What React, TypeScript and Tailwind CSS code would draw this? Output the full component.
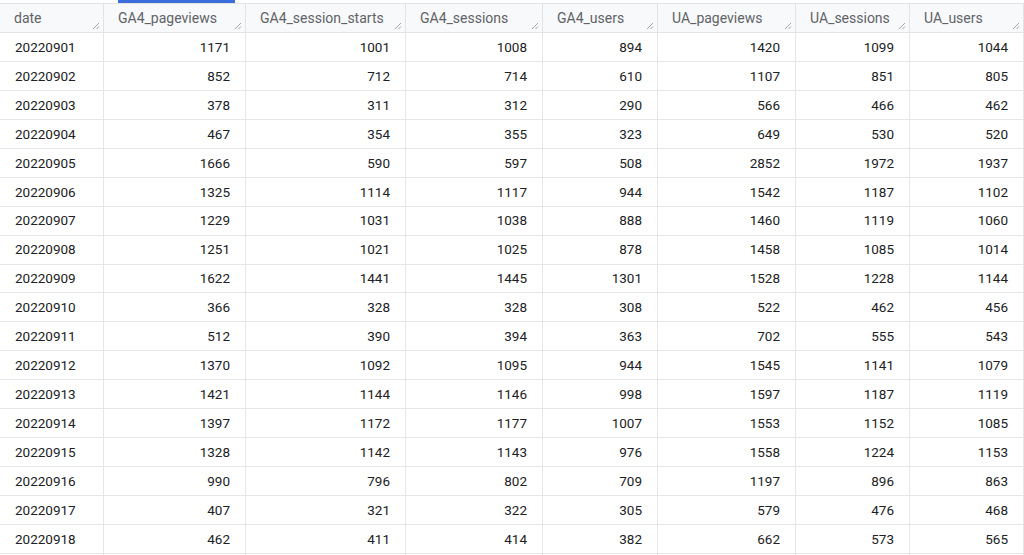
const columns = [
  { key: 'date', label: 'date', width: 'w-[104px]' },
  { key: 'ga4pv', label: 'GA4_pageviews', width: 'w-[142px]' },
  { key: 'ga4ss', label: 'GA4_session_starts', width: 'w-[160px]' },
  { key: 'ga4s', label: 'GA4_sessions', width: 'w-[137px]' },
  { key: 'ga4u', label: 'GA4_users', width: 'w-[115px]' },
  { key: 'uapv', label: 'UA_pageviews', width: 'w-[138px]' },
  { key: 'uas', label: 'UA_sessions', width: 'w-[114px]' },
  { key: 'uau', label: 'UA_users', width: 'w-[114px]' },
];

const rows: string[][] = [
  ['20220901', '1171', '1001', '1008', '894', '1420', '1099', '1044'],
  ['20220902', '852', '712', '714', '610', '1107', '851', '805'],
  ['20220903', '378', '311', '312', '290', '566', '466', '462'],
  ['20220904', '467', '354', '355', '323', '649', '530', '520'],
  ['20220905', '1666', '590', '597', '508', '2852', '1972', '1937'],
  ['20220906', '1325', '1114', '1117', '944', '1542', '1187', '1102'],
  ['20220907', '1229', '1031', '1038', '888', '1460', '1119', '1060'],
  ['20220908', '1251', '1021', '1025', '878', '1458', '1085', '1014'],
  ['20220909', '1622', '1441', '1445', '1301', '1528', '1228', '1144'],
  ['20220910', '366', '328', '328', '308', '522', '462', '456'],
  ['20220911', '512', '390', '394', '363', '702', '555', '543'],
  ['20220912', '1370', '1092', '1095', '944', '1545', '1141', '1079'],
  ['20220913', '1421', '1144', '1146', '998', '1597', '1187', '1119'],
  ['20220914', '1397', '1172', '1177', '1007', '1553', '1152', '1085'],
  ['20220915', '1328', '1142', '1143', '976', '1558', '1224', '1153'],
  ['20220916', '990', '796', '802', '709', '1197', '896', '863'],
  ['20220917', '407', '321', '322', '305', '579', '476', '468'],
  ['20220918', '462', '411', '414', '382', '662', '573', '565'],
  // next row is only a sliver at the bottom edge
  ['', '', '', '', '', '', '', ''],
];

function ResizeHandle() {
  return (
    <svg className="absolute right-[3px] bottom-[2px]" width="8" height="8" viewBox="0 0 8 8">
      <path d="M7 1 L1 7 M7 4.5 L4.5 7" stroke="#a0a4a8" strokeWidth="1" fill="none" />
    </svg>
  );
}

export default function App() {
  return (
    <div
      className="h-[555px] w-[1024px] overflow-hidden bg-white"
      style={{ fontFamily: 'Roboto, "Liberation Sans", sans-serif' }}
    >
      {/* Tab indicator */}
      <div className="h-[3px] flex">
        <div className="ml-[118px] w-[117px] bg-[#3b6edc]" />
      </div>

      {/* Header */}
      <div className="flex h-[30px] border-y border-[#e3e3e3] bg-[#f8f9fa]">
        {columns.map((col) => (
          <div
            key={col.key}
            className={`${col.width} shrink-0 relative flex items-center pl-[14px] pt-px border-r border-[#e3e3e3] text-[14px] text-[#5f6368]`}
          >
            {col.label}
            <ResizeHandle />
          </div>
        ))}
      </div>

      {/* Body */}
      {rows.map((row, r) => (
        <div key={r} className="flex h-[28.94px] border-b border-[#e6e6e6]">
          {row.map((cell, i) => (
            <div
              key={columns[i].key}
              className={`${columns[i].width} shrink-0 flex items-center border-r border-[#e6e6e6] text-[13.5px] text-[#202124] ${
                i === 0 ? 'pl-[15px]' : 'justify-end pr-[15px]'
              }`}
            >
              {cell}
            </div>
          ))}
        </div>
      ))}
    </div>
  );
}
